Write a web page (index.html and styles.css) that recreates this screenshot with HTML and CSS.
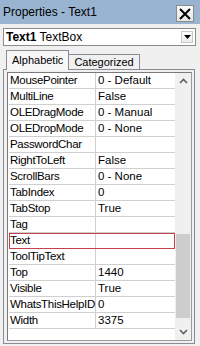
FILE: index.html
```html
<!DOCTYPE html>
<html lang="en">
<head>
    <meta charset="UTF-8" />
    <title>Properties - Text1</title>
    <link rel="stylesheet" href="styles.css">
</head>
<body>
    <div class="window">

        <!-- Title bar -->
        <div class="titlebar">
            <span class="title">Properties - Text1</span>
            <button class="close-btn">
                <svg width="12" height="12" viewBox="0 0 12 12">
                    <path d="M1 1 L11 11 M11 1 L1 11" stroke="#000" stroke-width="2" fill="none" />
                </svg>
            </button>
        </div>

        <!-- Object combo -->
        <div class="combo">
            <span class="combo-text"><b>Text1</b> TextBox</span>
            <span class="combo-btn">
                <svg width="7" height="4" viewBox="0 0 7 4">
                    <path d="M0 0 H7 L3.5 4 Z" fill="#000" />
                </svg>
            </span>
        </div>

        <!-- Tabs -->
        <div class="tabs">
            <div class="tab active">Alphabetic</div>
            <div class="tab">Categorized</div>
        </div>

        <div class="panel">
            <div class="grid">
                <div class="rows">
                    <div class="row"><span class="name">MousePointer</span><span class="value">0 - Default</span></div>
                    <div class="row"><span class="name">MultiLine</span><span class="value">False</span></div>
                    <div class="row"><span class="name">OLEDragMode</span><span class="value">0 - Manual</span></div>
                    <div class="row"><span class="name">OLEDropMode</span><span class="value">0 - None</span></div>
                    <div class="row"><span class="name">PasswordChar</span><span class="value"></span></div>
                    <div class="row"><span class="name">RightToLeft</span><span class="value">False</span></div>
                    <div class="row"><span class="name">ScrollBars</span><span class="value">0 - None</span></div>
                    <div class="row"><span class="name">TabIndex</span><span class="value">0</span></div>
                    <div class="row"><span class="name">TabStop</span><span class="value">True</span></div>
                    <div class="row"><span class="name">Tag</span><span class="value"></span></div>
                    <div class="row selected"><span class="name">Text</span><span class="value"></span></div>
                    <div class="row"><span class="name">ToolTipText</span><span class="value"></span></div>
                    <div class="row"><span class="name">Top</span><span class="value">1440</span></div>
                    <div class="row"><span class="name">Visible</span><span class="value">True</span></div>
                    <div class="row"><span class="name">WhatsThisHelpID</span><span class="value">0</span></div>
                    <div class="row"><span class="name">Width</span><span class="value">3375</span></div>
                </div>

                <!-- Scrollbar -->
                <div class="scrollbar">
                    <div class="arrow">
                        <svg width="9" height="6" viewBox="0 0 9 6">
                            <path d="M1 5 L4.5 1.5 L8 5" stroke="#606060" stroke-width="1.6" fill="none" />
                        </svg>
                    </div>
                    <div class="track">
                        <div class="thumb"></div>
                    </div>
                    <div class="arrow">
                        <svg width="9" height="6" viewBox="0 0 9 6">
                            <path d="M1 1 L4.5 4.5 L8 1" stroke="#606060" stroke-width="1.6" fill="none" />
                        </svg>
                    </div>
                </div>
            </div>
        </div>

    </div>
</body>
</html>
```

FILE: styles.css
```css
body {
    margin: 0;
    font-family: "Liberation Sans", Arial, sans-serif;
}

.window {
    width: 200px;
    height: 346px;
    background-color: #f0f0f0;
    overflow: hidden;
}

.titlebar {
    height: 24px;
    background-color: #99b4d1;
    display: flex;
    justify-content: space-between;
    align-items: flex-start;
    padding: 0 6px 0 3px;
}

.title {
    font-size: 12px;
    line-height: 24px;
    color: #000;
}

.close-btn {
    margin-top: 5px;
    width: 18px;
    height: 17px;
    padding: 0;
    border: 1px solid #8a8a8a;
    background: linear-gradient(#fafafa, #e6e6e6);
    display: flex;
    align-items: center;
    justify-content: center;
}

.combo {
    margin: 4px 4px 0 3px;
    height: 18px;
    box-sizing: border-box;
    border: 1px solid #8b8b8b;
    background-color: #fff;
    display: flex;
    align-items: center;
    justify-content: space-between;
    padding: 0 2px 0 2px;
}

.combo-text {
    font-size: 12px;
    color: #000;
}

.combo-btn {
    width: 12px;
    height: 12px;
    box-sizing: border-box;
    border: 1px solid #c8c8c8;
    background: linear-gradient(#fdfdfd, #ececec);
    display: flex;
    align-items: center;
    justify-content: center;
}

.tabs {
    margin: 4px 0 0 6px;
    height: 19px;
    display: flex;
    align-items: flex-end;
}

.tab {
    font-size: 11px;
    color: #000;
    height: 15px;
    line-height: 14px;
    padding: 0 5px;
    box-sizing: border-box;
    border: 1px solid #898c95;
    border-bottom: none;
    border-left: none;
    background-color: #f0f0f0;
}

.tab.active {
    height: 20px;
    line-height: 18px;
    border-left: 1px solid #898c95;
    background-color: #f7f7f7;
    margin-bottom: -1px;
    position: relative;
    z-index: 1;
}

.panel {
    margin: 0 5px 0 3px;
    height: 275px;
    box-sizing: border-box;
    border: 1px solid #898c95;
    padding: 2px 2px 2px 3px;
}

.grid {
    height: 269px;
    box-sizing: border-box;
    border: 1px solid #7a7a7a;
    border-right-color: #9a9a9a;
    border-bottom-color: #9a9a9a;
    background-color: #fff;
    display: flex;
}

.rows {
    flex: 1;
    padding-left: 1px;
}

.row {
    height: 16px;
    box-sizing: border-box;
    border-bottom: 1px solid #cfcfcf;
    display: flex;
    font-size: 11.5px;
    line-height: 15px;
    color: #000;
}

.name {
    width: 85px;
    padding-left: 1px;
    border-right: 1px solid #cfcfcf;
    white-space: nowrap;
    letter-spacing: -0.3px;
}

.value {
    flex: 1;
    padding-left: 2px;
    white-space: nowrap;
}

.row.selected {
    outline: 1px solid #c8404c;
    outline-offset: -1px;
}

.scrollbar {
    width: 16px;
    display: flex;
    flex-direction: column;
    background-color: #f0f0f0;
}

.arrow {
    height: 16px;
    display: flex;
    align-items: center;
    justify-content: center;
}

.track {
    flex: 1;
    padding: 145px 1px 0 1px;
}

.thumb {
    height: 84px;
    background-color: #cdcdcd;
}
```
